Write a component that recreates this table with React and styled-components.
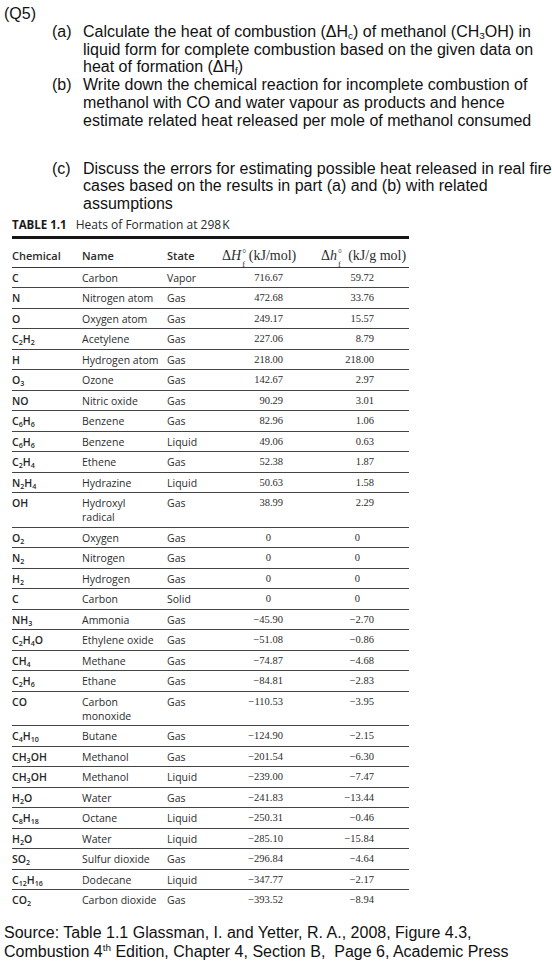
import React from "react";
import styled, { createGlobalStyle } from "styled-components";

const GlobalStyle = createGlobalStyle`
  html, body {
    margin: 0;
    padding: 0;
    background: #ffffff;
  }
  body {
    overflow: hidden;
  }
`;

const rows = [
  ["C", "Carbon", "Vapor", "716.67", "59.72"],
  ["N", "Nitrogen atom", "Gas", "472.68", "33.76"],
  ["O", "Oxygen atom", "Gas", "249.17", "15.57"],
  ["C_2H_2", "Acetylene", "Gas", "227.06", "8.79"],
  ["H", "Hydrogen atom", "Gas", "218.00", "218.00"],
  ["O_3", "Ozone", "Gas", "142.67", "2.97"],
  ["NO", "Nitric oxide", "Gas", "90.29", "3.01"],
  ["C_6H_6", "Benzene", "Gas", "82.96", "1.06"],
  ["C_6H_6", "Benzene", "Liquid", "49.06", "0.63"],
  ["C_2H_4", "Ethene", "Gas", "52.38", "1.87"],
  ["N_2H_4", "Hydrazine", "Liquid", "50.63", "1.58"],
  ["OH", "Hydroxyl\nradical", "Gas", "38.99", "2.29"],
  ["O_2", "Oxygen", "Gas", "0", "0"],
  ["N_2", "Nitrogen", "Gas", "0", "0"],
  ["H_2", "Hydrogen", "Gas", "0", "0"],
  ["C", "Carbon", "Solid", "0", "0"],
  ["NH_3", "Ammonia", "Gas", "-45.90", "-2.70"],
  ["C_2H_4O", "Ethylene oxide", "Gas", "-51.08", "-0.86"],
  ["CH_4", "Methane", "Gas", "-74.87", "-4.68"],
  ["C_2H_6", "Ethane", "Gas", "-84.81", "-2.83"],
  ["CO", "Carbon\nmonoxide", "Gas", "-110.53", "-3.95"],
  ["C_4H_10", "Butane", "Gas", "-124.90", "-2.15"],
  ["CH_3OH", "Methanol", "Gas", "-201.54", "-6.30"],
  ["CH_3OH", "Methanol", "Liquid", "-239.00", "-7.47"],
  ["H_2O", "Water", "Gas", "-241.83", "-13.44"],
  ["C_8H_18", "Octane", "Liquid", "-250.31", "-0.46"],
  ["H_2O", "Water", "Liquid", "-285.10", "-15.84"],
  ["SO_2", "Sulfur dioxide", "Gas", "-296.84", "-4.64"],
  ["C_12H_16", "Dodecane", "Liquid", "-347.77", "-2.17"],
  ["CO_2", "Carbon dioxide", "Gas", "-393.52", "-8.94"],
];

const Formula = ({ text }) => {
  const parts = text.split(/_(\d+)/);
  return (
    <>
      {parts.map((p, i) =>
        i % 2 ? <FSub key={i}>{p}</FSub> : <React.Fragment key={i}>{p}</React.Fragment>
      )}
    </>
  );
};

const num = (v) => (v.startsWith("-") ? "\u2212" + v.slice(1) : v);

// degree sign over a subscript f, as in the printed table
const Standard = () => (
  <Stack>
    <Deg>°</Deg>
    <Low>f</Low>
  </Stack>
);

const App = () => {
  return (
    <Page>
      <GlobalStyle />
      <Question>(Q5)</Question>

      <Part>
        <Label>(a)</Label>
        <Body>
          Calculate the heat of combustion (ΔH<Sub>c</Sub>) of methanol (CH<Sub>3</Sub>OH) in
          <br />
          liquid form for complete combustion based on the given data on
          <br />
          heat of formation (ΔH<Sub>f</Sub>)
        </Body>
      </Part>
      <Part>
        <Label>(b)</Label>
        <Body>
          Write down the chemical reaction for incomplete combustion of
          <br />
          methanol with CO and water vapour as products and hence
          <br />
          estimate related heat released per mole of methanol consumed
        </Body>
      </Part>
      <Part $gap={30}>
        <Label>(c)</Label>
        <Body>
          Discuss the errors for estimating possible heat released in real fire
          <br />
          cases based on the results in part (a) and (b) with related
          <br />
          assumptions
        </Body>
      </Part>

      <Caption>
        <CaptionTag>TABLE 1.1</CaptionTag>
        <span>Heats of Formation at 298&#8202;K</span>
      </Caption>

      <Table>
        <colgroup>
          <col style={{ width: 70 }} />
          <col style={{ width: 85 }} />
          <col style={{ width: 55 }} />
          <col style={{ width: 88 }} />
          <col style={{ width: 99 }} />
        </colgroup>
        <thead>
          <tr>
            <Th>Chemical</Th>
            <Th>Name</Th>
            <Th>State</Th>
            <SerifTh>
              Δ<i>H</i>
              <Standard />
              (kJ/mol)
            </SerifTh>
            <SerifTh $pad={11}>
              Δ<i>h</i>
              <Standard />
              &nbsp;(kJ/g mol)
            </SerifTh>
          </tr>
        </thead>
        <tbody>
          {rows.map(([f, name, state, dh, dhg], i) => (
            <Row key={i} $last={i === rows.length - 1}>
              <ChemCell>
                <Formula text={f} />
              </ChemCell>
              <Cell>{name}</Cell>
              <Cell>{state}</Cell>
              <NumCell $right={dh === "0" ? 39 : 27}>{num(dh)}</NumCell>
              <NumCell $right={dhg === "0" ? 49 : 35}>{num(dhg)}</NumCell>
            </Row>
          ))}
        </tbody>
      </Table>

      <Source>
        Source: Table 1.1 Glassman, I. and Yetter, R. A., 2008, Figure 4.3,
        <br />
        Combustion 4<Sup>th</Sup> Edition, Chapter 4, Section B,&nbsp; Page 6, Academic Press
      </Source>
    </Page>
  );
};

const Page = styled.div`
  width: 552px;
  min-height: 965px;
  box-sizing: border-box;
  padding-top: 5px;
  font-family: "Liberation Sans", Arial, sans-serif;
  font-size: 16px;
  line-height: 17.8px;
  color: #111;
  overflow: hidden;
`;

const Question = styled.div`
  padding-left: 4px;
`;

const Part = styled.div`
  display: grid;
  grid-template-columns: 31px 1fr;
  padding-left: 52px;
  margin-top: ${(p) => p.$gap || 0}px;
`;

const Label = styled.div``;

const Body = styled.div`
  white-space: nowrap;
`;

const Sub = styled.sub`
  font-size: 0.62em;
  line-height: 0;
  vertical-align: -0.2em;
`;

const Sup = styled.sup`
  font-size: 0.62em;
  line-height: 0;
  vertical-align: 0.6em;
`;

const Caption = styled.div`
  display: flex;
  align-items: baseline;
  gap: 9px;
  margin-top: 5px;
  padding-left: 12px;
  font-family: "Open Sans", sans-serif;
  font-size: 12px;
  line-height: 14px;
  color: #2a2a2a;
`;

const CaptionTag = styled.span`
  font-weight: 700;
  font-size: 11.5px;
  color: #1a1a1a;
`;

const Table = styled.table`
  margin: 4px 0 0 12px;
  width: 397px;
  table-layout: fixed;
  border-collapse: collapse;
  border-top: 3px solid #161616;
  font-family: "Open Sans", sans-serif;
  color: #2c2c2c;
`;

const Th = styled.th`
  text-align: left;
  font-weight: 600;
  font-size: 11px;
  line-height: 16px;
  height: 16px;
  padding: 9px 0 3px;
  border-bottom: 1px solid #3a3a3a;
  white-space: nowrap;
`;

const SerifTh = styled(Th)`
  font-family: "Liberation Serif", "Times New Roman", serif;
  font-weight: 400;
  font-size: 14px;
  padding-left: ${(p) => p.$pad || 0}px;

  i {
    font-style: italic;
  }
`;

const Stack = styled.span`
  position: relative;
  display: inline-block;
  width: 0.55em;
  height: 0;
`;

const Deg = styled.span`
  position: absolute;
  left: 1px;
  top: -1.05em;
  font-size: 0.7em;
  line-height: 0.8;
`;

const Low = styled.span`
  position: absolute;
  left: 1px;
  top: 0.15em;
  font-size: 0.6em;
  line-height: 0.9;
`;

const Row = styled.tr`
  td {
    border-bottom: ${(p) => (p.$last ? "none" : "1px solid #444")};
  }
`;

const Cell = styled.td`
  font-size: 10.5px;
  line-height: 14px;
  padding: 3px 0 2.5px;
  vertical-align: top;
  white-space: pre-line;
`;

const ChemCell = styled(Cell)`
  font-weight: 600;
  color: #262626;
`;

const FSub = styled.sub`
  font-size: 0.68em;
  line-height: 0;
  vertical-align: -0.3em;
`;

const NumCell = styled(Cell)`
  font-family: "Liberation Serif", "Times New Roman", serif;
  font-size: 10.5px;
  text-align: right;
  padding-right: ${(p) => p.$right}px;
  white-space: nowrap;
`;

const Source = styled.div`
  margin-top: 13px;
  padding-left: 4px;
  line-height: 19px;
  white-space: nowrap;
`;

export default App;
